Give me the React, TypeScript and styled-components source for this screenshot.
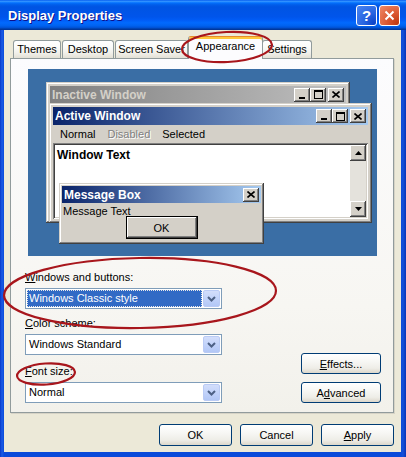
import React from "react";
import styled, { createGlobalStyle, css } from "styled-components";

const FONT = `"Liberation Sans", Arial, sans-serif`;

const GlobalStyle = createGlobalStyle`
  html, body { margin: 0; padding: 0; background: #ECE9D8; }
  body { font-family: ${FONT}; font-size: 11px; color: #000; overflow: hidden; }
  * { box-sizing: border-box; }
`;

/* ---------- XP window chrome ---------- */
const Window = styled.div`
  position: relative;
  width: 406px;
  height: 457px;
  display: flex;
  flex-direction: column;
  background: linear-gradient(90deg, #0838C8 0px, #1A5BE6 2px, #0A4ADA 4px, #0A4ADA 401px, #1650D8 403px, #0834B8 406px);
`;

const TitleBar = styled.div`
  height: 30px;
  flex: none;
  display: flex;
  align-items: center;
  padding: 0 6px 0 8px;
  background: linear-gradient(180deg, #0058EE 0%, #3593FF 4%, #288EFF 6%, #127DFF 8%, #036FFC 10%, #0262EE 14%, #0057E5 20%, #0054E3 24%, #0055EB 56%, #005BF5 66%, #026AFE 76%, #0062EF 86%, #0052D6 92%, #0040AB 96%, #003092 100%);
`;

const Title = styled.div`
  flex: 1;
  color: #fff;
  font: bold 13px ${FONT};
  text-shadow: 1px 1px #0F1089;
  padding-top: 1px;
`;

const CaptionButton = styled.div<{ $kind: "help" | "close" }>`
  width: 21px;
  height: 21px;
  margin-left: 2px;
  border: 1px solid #fff;
  border-radius: 3px;
  display: flex;
  align-items: center;
  justify-content: center;
  color: #fff;
  font: bold 15px ${FONT};
  ${(p) =>
    p.$kind === "help"
      ? css`
          background: radial-gradient(circle at 90% 90%, #0C44C8 0%, #2663E0 40%, #4B86F2 100%);
        `
      : css`
          background: radial-gradient(circle at 90% 90%, #C03A12 0%, #DA5630 40%, #EF8A68 100%);
        `}
`;

const Body = styled.div`
  flex: 1;
  margin: 0 5px 5px 4px;
  background: #ECE9D8;
  padding: 6px 7px 6px 6px;
  display: flex;
  flex-direction: column;
`;

/* ---------- Tabs ---------- */
const TabStrip = styled.div`
  height: 22px;
  flex: none;
  display: flex;
  align-items: flex-end;
  padding-left: 3px;
  position: relative;
  z-index: 2;
`;

const Tab = styled.div<{ $w: number; $active?: boolean }>`
  width: ${(p) => p.$w}px;
  height: 18px;
  margin-right: 1px;
  border: 1px solid #919B9C;
  border-bottom: none;
  border-radius: 3px 3px 0 0;
  background: linear-gradient(180deg, #FFFFFF 0%, #FBFBF9 35%, #F1F0EA 70%, #E3E0D5 100%);
  text-align: center;
  padding-top: 2px;
  line-height: 13px;
  font-size: 11px;
  white-space: nowrap;
  ${(p) =>
    p.$active &&
    css`
      position: relative;
      z-index: 3;
      height: 23px;
      margin: 0 -1px -1px -1px;
      padding-top: 3px;
      background: #FCFCFE;
      border-top-color: #E68B2C;
      box-shadow: inset 0 2px #FFC83C;
    `}
`;

const Panel = styled.div`
  height: 355px;
  flex: none;
  border: 1px solid #919B9C;
  background: linear-gradient(180deg, #FCFCFE 0%, #F7F6F2 70%, #F2F1EB 100%);
  box-shadow: 1px 1px 0 #D6D3C6;
  padding: 10px 12px 9px 14px;
  display: flex;
  flex-direction: column;
  position: relative;
  z-index: 1;
`;

/* ---------- Preview canvas (classic windows) ---------- */
const Preview = styled.div`
  height: 187px;
  flex: none;
  margin: 0 4px 0 3px;
  background: #3A6EA5;
  position: relative;
  overflow: hidden;
`;

const ClassicWindow = styled.div<{ $x: number; $y: number; $w: number; $h: number; $pad?: number }>`
  position: absolute;
  left: ${(p) => p.$x}px;
  top: ${(p) => p.$y}px;
  width: ${(p) => p.$w}px;
  height: ${(p) => p.$h}px;
  padding: ${(p) => p.$pad ?? 4}px;
  background: #D4D0C8;
  box-shadow: inset -1px -1px #404040, inset 1px 1px #D4D0C8, inset -2px -2px #808080, inset 2px 2px #FFFFFF;
  display: flex;
  flex-direction: column;
`;

const Caption = styled.div<{ $active?: boolean; $h: number }>`
  height: ${(p) => p.$h}px;
  flex: none;
  display: flex;
  align-items: center;
  padding: 0 2px 0 2px;
  font: bold 12px ${FONT};
  color: ${(p) => (p.$active ? "#FFFFFF" : "#D4D0C8")};
  background: ${(p) =>
    p.$active
      ? "linear-gradient(90deg, #0A246A 0%, #A6CAF0 100%)"
      : "linear-gradient(90deg, #808080 0%, #C0C0C0 100%)"};
`;

const CaptionText = styled.div`
  flex: 1;
  white-space: nowrap;
`;

const ClassicBtn = styled.div<{ $gap?: boolean }>`
  width: 16px;
  height: 14px;
  margin-left: ${(p) => (p.$gap ? 2 : 0)}px;
  background: #D4D0C8;
  box-shadow: inset -1px -1px #404040, inset 1px 1px #FFFFFF, inset -2px -2px #808080, inset 2px 2px #D4D0C8;
  display: flex;
  align-items: center;
  justify-content: center;
  flex: none;
`;

const MenuBar = styled.div`
  height: 18px;
  flex: none;
  display: flex;
  align-items: center;
  padding-left: 1px;
  font-size: 11px;
`;

const MenuItem = styled.span<{ $disabled?: boolean }>`
  padding: 0 6px;
  ${(p) =>
    p.$disabled &&
    css`
      color: #808080;
      text-shadow: 1px 1px #FFFFFF;
    `}
`;

const TextArea = styled.div`
  flex: 1;
  display: flex;
  background: #fff;
  box-shadow: inset 1px 1px #808080, inset -1px -1px #FFFFFF, inset 2px 2px #404040, inset -2px -2px #D4D0C8;
  padding: 2px;
`;

const TextBody = styled.div`
  flex: 1;
  padding: 3px 2px;
  font: bold 12px ${FONT};
`;

const ScrollBar = styled.div`
  width: 16px;
  display: flex;
  flex-direction: column;
  justify-content: space-between;
  background: #E4E2DC;
`;

const ScrollBtn = styled(ClassicBtn)`
  height: 16px;
`;

const MsgBody = styled.div`
  flex: 1;
  display: flex;
  flex-direction: column;
  align-items: center;
  padding: 2px 0 0;
`;

const MsgText = styled.div`
  align-self: flex-start;
  padding-left: 1px;
  line-height: 13px;
  font-size: 11px;
`;

const ClassicPush = styled.div`
  width: 72px;
  height: 23px;
  margin-top: -2px;
  background: #D4D0C8;
  border: 1px solid #000;
  box-shadow: inset -1px -1px #404040, inset 1px 1px #FFFFFF, inset -2px -2px #808080;
  display: flex;
  align-items: center;
  justify-content: center;
  font-size: 11px;
  position: relative;
`;

/* ---------- Controls ---------- */
const Controls = styled.div`
  margin-top: 15px;
  display: flex;
  justify-content: space-between;
  align-items: flex-end;
`;

const Column = styled.div`
  display: flex;
  flex-direction: column;
`;

const Label = styled.div<{ $mt?: number }>`
  margin-top: ${(p) => p.$mt ?? 0}px;
  line-height: 13px;
  font-size: 11px;
  margin-bottom: 4px;
`;

const Combo = styled.div`
  width: 197px;
  height: 21px;
  border: 1px solid #7F9DB9;
  background: #fff;
  padding: 1px;
  display: flex;
  align-items: center;
`;

const ComboText = styled.div<{ $selected?: boolean }>`
  flex: 1;
  height: 17px;
  margin-right: 1px;
  line-height: 17px;
  padding-left: 2px;
  font-size: 11px;
  white-space: nowrap;
  ${(p) =>
    p.$selected &&
    css`
      background: #316AC5;
      color: #fff;
      outline: 1px dotted #E8E8E8;
      outline-offset: -1px;
    `}
`;

const ComboButton = styled.div`
  width: 17px;
  height: 17px;
  border: 1px solid #BACBF5;
  border-radius: 2px;
  background: linear-gradient(180deg, #D3DEFB 0%, #C2D3FA 50%, #B2C7F6 100%);
  display: flex;
  align-items: center;
  justify-content: center;
`;

const ButtonStack = styled.div`
  display: flex;
  flex-direction: column;
  gap: 8px;
`;

const XPButton = styled.div<{ $w: number; $h: number }>`
  width: ${(p) => p.$w}px;
  height: ${(p) => p.$h}px;
  border: 1px solid #003C74;
  border-radius: 3px;
  background: linear-gradient(180deg, #FFFFFF 0%, #F7F7F4 40%, #EEEDE7 75%, #DCD7CB 100%);
  display: flex;
  align-items: center;
  justify-content: center;
  font-size: 11px;
  color: #000;
`;

const ButtonRow = styled.div`
  margin-top: 11px;
  display: flex;
  justify-content: flex-end;
  gap: 8px;
`;

/* ---------- Annotation overlay ---------- */
const Overlay = styled.svg`
  position: absolute;
  left: 0;
  top: 0;
  pointer-events: none;
  z-index: 10;
`;

/* ---------- Icons ---------- */
const MinGlyph = () => (
  <svg width="8" height="8" viewBox="0 0 8 8">
    <rect x="1" y="6" width="6" height="2" fill="#000" />
  </svg>
);
const MaxGlyph = () => (
  <svg width="9" height="9" viewBox="0 0 9 9">
    <rect x="0.5" y="0.5" width="8" height="8" fill="none" stroke="#000" />
    <rect x="0" y="0" width="9" height="2" fill="#000" />
  </svg>
);
const CloseGlyph = () => (
  <svg width="8" height="7" viewBox="0 0 8 7">
    <path d="M0.5 0.5 L7.5 6.5 M7.5 0.5 L0.5 6.5" stroke="#000" strokeWidth="1.6" />
  </svg>
);
const Chevron = () => (
  <svg width="9" height="6" viewBox="0 0 9 6">
    <path d="M1 1 L4.5 4.5 L8 1" stroke="#4D6185" strokeWidth="2" fill="none" />
  </svg>
);
const UpArrow = () => (
  <svg width="7" height="4" viewBox="0 0 7 4">
    <path d="M3.5 0 L7 4 L0 4 Z" fill="#000" />
  </svg>
);
const DownArrow = () => (
  <svg width="7" height="4" viewBox="0 0 7 4">
    <path d="M0 0 L7 0 L3.5 4 Z" fill="#000" />
  </svg>
);

const TitleButtons = ({ close }: { close?: boolean }) => (
  <>
    {!close && (
      <>
        <ClassicBtn>
          <MinGlyph />
        </ClassicBtn>
        <ClassicBtn>
          <MaxGlyph />
        </ClassicBtn>
      </>
    )}
    <ClassicBtn $gap={!close}>
      <CloseGlyph />
    </ClassicBtn>
  </>
);

export default function App() {
  return (
    <>
      <GlobalStyle />
      <Window>
        <TitleBar>
          <Title>Display Properties</Title>
          <CaptionButton $kind="help">?</CaptionButton>
          <CaptionButton $kind="close">
            <svg width="11" height="11" viewBox="0 0 11 11">
              <path d="M1.5 1.5 L9.5 9.5 M9.5 1.5 L1.5 9.5" stroke="#fff" strokeWidth="2" />
            </svg>
          </CaptionButton>
        </TitleBar>
        <Body>
          <TabStrip>
            <Tab $w={48}>Themes</Tab>
            <Tab $w={52}>Desktop</Tab>
            <Tab $w={73}>Screen Saver</Tab>
            <Tab $w={75} $active>
              Appearance
            </Tab>
            <Tab $w={50}>Settings</Tab>
          </TabStrip>
          <Panel>
            <Preview>
              <ClassicWindow $x={18} $y={13} $w={304} $h={141}>
                <Caption $h={17}>
                  <CaptionText>Inactive Window</CaptionText>
                  <TitleButtons />
                </Caption>
              </ClassicWindow>
              <ClassicWindow $x={21} $y={34} $w={323} $h={120}>
                <Caption $h={18} $active>
                  <CaptionText>Active Window</CaptionText>
                  <TitleButtons />
                </Caption>
                <MenuBar>
                  <MenuItem>Normal</MenuItem>
                  <MenuItem $disabled>Disabled</MenuItem>
                  <MenuItem>Selected</MenuItem>
                </MenuBar>
                <TextArea>
                  <TextBody>Window Text</TextBody>
                  <ScrollBar>
                    <ScrollBtn>
                      <UpArrow />
                    </ScrollBtn>
                    <ScrollBtn>
                      <DownArrow />
                    </ScrollBtn>
                  </ScrollBar>
                </TextArea>
              </ClassicWindow>
              <ClassicWindow $x={31} $y={114} $w={205} $h={61} $pad={3}>
                <Caption $h={17} $active>
                  <CaptionText>Message Box</CaptionText>
                  <TitleButtons close />
                </Caption>
                <MsgBody>
                  <MsgText>Message Text</MsgText>
                  <ClassicPush>OK</ClassicPush>
                </MsgBody>
              </ClassicWindow>
            </Preview>
            <Controls>
              <Column>
                <Label>
                  <u>W</u>indows and buttons:
                </Label>
                <Combo>
                  <ComboText $selected>Windows Classic style</ComboText>
                  <ComboButton>
                    <Chevron />
                  </ComboButton>
                </Combo>
                <Label $mt={8}>
                  <u>C</u>olor scheme:
                </Label>
                <Combo>
                  <ComboText>Windows Standard</ComboText>
                  <ComboButton>
                    <Chevron />
                  </ComboButton>
                </Combo>
                <Label $mt={10}>
                  <u>F</u>ont size:
                </Label>
                <Combo>
                  <ComboText>Normal</ComboText>
                  <ComboButton>
                    <Chevron />
                  </ComboButton>
                </Combo>
              </Column>
              <ButtonStack>
                <XPButton $w={80} $h={21}>
                  <span>
                    <u>E</u>ffects...
                  </span>
                </XPButton>
                <XPButton $w={80} $h={21}>
                  <span>
                    A<u>d</u>vanced
                  </span>
                </XPButton>
              </ButtonStack>
            </Controls>
          </Panel>
          <ButtonRow>
            <XPButton $w={73} $h={22}>OK</XPButton>
            <XPButton $w={73} $h={22}>Cancel</XPButton>
            <XPButton $w={73} $h={22}>
              <span>
                <u>A</u>pply
              </span>
            </XPButton>
          </ButtonRow>
        </Body>
        <Overlay width="406" height="457" viewBox="0 0 406 457">
          <g fill="none" stroke="#A8161C" strokeWidth="2.2">
            <ellipse cx="227" cy="47" rx="45" ry="15" transform="rotate(-3 227 47)" />
            <ellipse cx="140" cy="293" rx="136" ry="35" transform="rotate(-1 140 293)" />
            <ellipse cx="46" cy="374" rx="29" ry="10.5" transform="rotate(-4 46 374)" />
          </g>
        </Overlay>
      </Window>
    </>
  );
}
